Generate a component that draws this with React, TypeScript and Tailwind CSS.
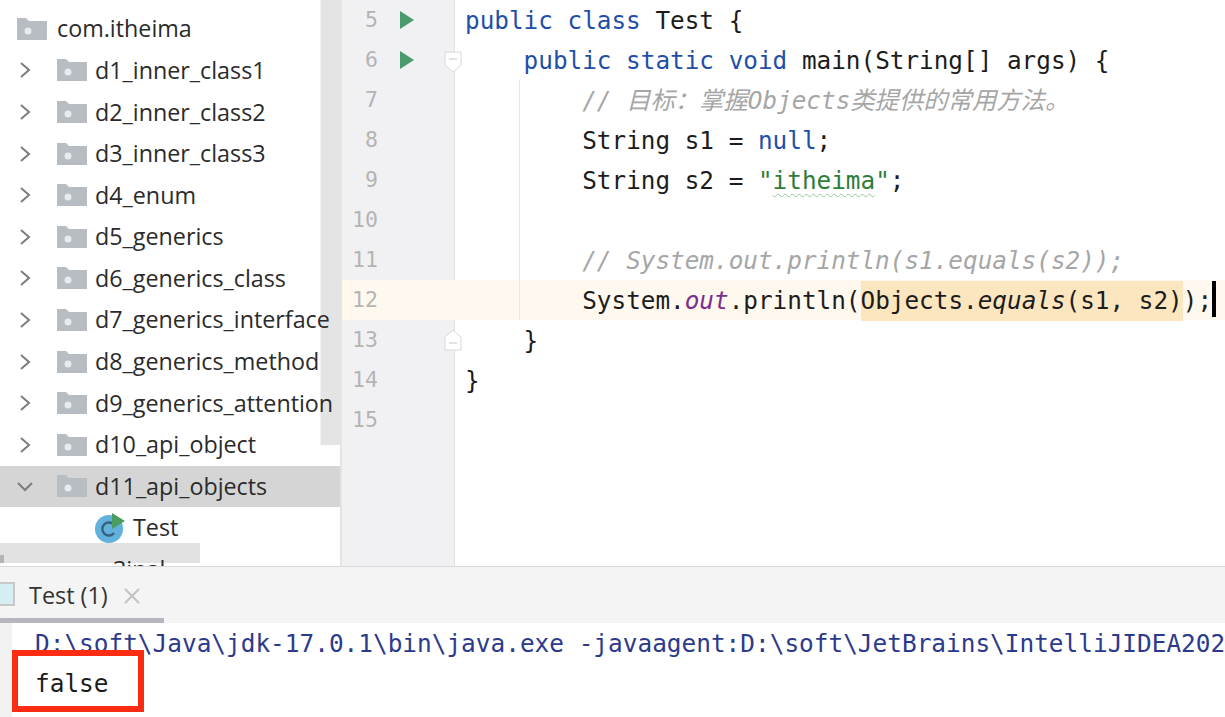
import React from 'react';

const mono = { fontFamily: '"DejaVu Sans Mono", "Noto Sans CJK SC", monospace' };

const FolderIcon = () => (
    <svg width="30" height="24" viewBox="0 0 30 24" className="shrink-0">
        <path d="M0 1 H9 L12 4 H30 V23 H0 Z" fill="#b7bdc3" />
        <circle cx="11" cy="14" r="3.5" fill="#e8eaec" />
    </svg>
);

const Chevron = ({ open }: { open?: boolean }) => (
    <svg width="16" height="16" viewBox="0 0 16 16" className="shrink-0" fill="none" stroke="#7c7c7c" strokeWidth="2">
        {open ? <path d="M1 5 L8 12 L15 5" /> : <path d="M4 1 L12 8 L4 15" />}
    </svg>
);

const folders = [
    'd1_inner_class1',
    'd2_inner_class2',
    'd3_inner_class3',
    'd4_enum',
    'd5_generics',
    'd6_generics_class',
    'd7_generics_interface',
    'd8_generics_method',
    'd9_generics_attention',
    'd10_api_object',
];

const ProjectTree = () => (
    <div className="relative w-[340px] shrink-0 overflow-hidden bg-white pt-2 text-[23.3px] text-[#2b2b2b]" style={{ fontFamily: '"Open Sans", sans-serif' }}>
        {/* scrollbars go under the rows, long names run over them */}
        <div className="absolute left-[320px] top-0 h-[445px] w-[20px] border-l border-[#f2f2f2] bg-[#e4e4e4]" />
        <div className="absolute bottom-[3px] left-0 h-[20px] w-[200px] bg-[#e2e2e2]" />
        <div className="absolute bottom-[3px] left-0 h-[8px] w-[4px] bg-[#b5b5b5]" />
        <div className="relative">
            <div className="flex h-[41.6px] items-center gap-[10px] whitespace-nowrap pl-[17px]">
                <FolderIcon />
                <span>com.itheima</span>
            </div>
            {folders.map((name) => (
                <div key={name} className="flex h-[41.6px] items-center whitespace-nowrap pl-[17px]">
                    <Chevron />
                    <div className="ml-[24px] mr-[8px]"><FolderIcon /></div>
                    <span>{name}</span>
                </div>
            ))}
            <div className="flex h-[41.6px] items-center whitespace-nowrap bg-[#d5d5d5] pl-[17px]">
                <Chevron open />
                <div className="ml-[24px] mr-[8px]"><FolderIcon /></div>
                <span>d11_api_objects</span>
            </div>
            <div className="flex h-[41.6px] items-center whitespace-nowrap pl-[94px]">
                <svg width="32" height="32" viewBox="0 0 32 32" className="shrink-0">
                    <circle cx="15" cy="17" r="14" fill="#62b1dd" />
                    <path d="M20 13 A6.5 6.5 0 1 0 20 21" fill="none" stroke="#35627f" strokeWidth="2.4" />
                    <path d="M18 1 L31 9 L18 17 Z" fill="#4a9d5f" />
                </svg>
                <span className="ml-[7px]">Test</span>
            </div>
            <div className="flex h-[41.6px] items-center whitespace-nowrap pl-[113px]">3inal</div>
        </div>
    </div>
);

type Line = { n: number; run?: boolean; active?: boolean; code?: React.ReactNode };

const lines: Line[] = [
    { n: 5, run: true, code: <><span className="text-[#1f4fa8]">public class</span> Test {'{'}</> },
    { n: 6, run: true, code: <>{'    '}<span className="text-[#1f4fa8]">public static void</span> main(String[] args) {'{'}</> },
    { n: 7, code: <span className="italic text-[#a6a6a6]">{'        '}// 目标：掌握Objects类提供的常用方法。</span> },
    { n: 8, code: <>{'        '}String s1 = <span className="text-[#1f4fa8]">null</span>;</> },
    { n: 9, code: <>{'        '}String s2 = <span className="text-[#2f7d3b]">"<span className="underline decoration-wavy decoration-[#9cc7a4] decoration-1 underline-offset-4">itheima</span>"</span>;</> },
    { n: 10 },
    { n: 11, code: <span className="italic text-[#a6a6a6]">{'        '}// System.out.println(s1.equals(s2));</span> },
    {
        n: 12,
        active: true,
        code: (
            <>
                {'        '}System.<span className="italic text-[#7a2f8f]">out</span>.println(
                <span className="inline-block h-10 bg-[#fbe6bf]">Objects.<span className="italic">equals</span>(s1, s2)</span>);
            </>
        ),
    },
    { n: 13, code: <>{'    '}{'}'}</> },
    { n: 14, code: <>{'}'}</> },
    { n: 15 },
];

const Editor = () => (
    <div className="relative flex min-w-0 flex-1 overflow-hidden border-l-2 border-[#e4e4e4] bg-white text-[24.33px] text-[#1c1c1c]" style={mono}>
        <div className="w-[113px] shrink-0 border-r border-[#e2e2e2] bg-[#f1f1f3]" />
        <div className="absolute inset-0">
            {lines.map((l) => (
                <div key={l.n} className={`flex h-10 items-center whitespace-pre ${l.active ? 'bg-[#fff8ee]' : ''}`}>
                    <span className="w-[36px] text-right text-[21.5px] text-[#b4b4b4]">{l.n}</span>
                    <span className="flex w-[37px] justify-end">
                        {l.run && (
                            <svg width="16" height="20" viewBox="0 0 16 20">
                                <path d="M1 1 L15 10 L1 19 Z" fill="#4a9a6c" />
                            </svg>
                        )}
                    </span>
                    <span className="pl-[50px] pt-[2px] leading-10">{l.code}</span>
                </div>
            ))}
        </div>
        {/* indent guide and fold markers */}
        <div className="absolute left-[177px] top-[80px] h-[240px] w-px bg-[#e8e8e8]" />
        <svg className="absolute left-[102px] top-[51px]" width="18" height="22" viewBox="0 0 18 22">
            <path d="M1 1 H17 V14 L9 21 L1 14 Z" fill="#fff" stroke="#d8d8d8" />
            <path d="M5 8 H13" stroke="#c4c4c4" />
        </svg>
        <svg className="absolute left-[102px] top-[329px]" width="18" height="22" viewBox="0 0 18 22">
            <path d="M1 21 H17 V8 L9 1 L1 8 Z" fill="#fff" stroke="#d8d8d8" />
            <path d="M5 14 H13" stroke="#c4c4c4" />
        </svg>
        <div className="absolute left-[870px] top-[281px] h-[36px] w-[4px] bg-black" />
    </div>
);

const Console = () => (
    <div className="relative flex min-h-0 flex-1 flex-col overflow-hidden border-t border-[#d8d8d8] bg-white">
        <div className="flex h-[56px] shrink-0 flex-col bg-[#f4f4f4]">
            <div className="flex w-[164px] flex-1 items-center border-b-[5px] border-[#b5b6c0] pt-[6px] text-[23.4px] text-[#333]" style={{ fontFamily: '"Open Sans", sans-serif' }}>
                <svg width="16" height="24" viewBox="0 0 16 24" className="-mt-[4px] shrink-0">
                    <rect x="-4" y="1" width="18" height="22" fill="#d5eef3" stroke="#c8c8c8" strokeWidth="2" />
                </svg>
                <span className="ml-[13px]">Test (1)</span>
                <svg width="18" height="18" viewBox="0 0 18 18" className="ml-[15px]" stroke="#c2c2c2" strokeWidth="2">
                    <path d="M2 2 L16 16 M16 2 L2 16" />
                </svg>
            </div>
        </div>
        <div className="flex flex-1">
            <div className="w-[12px] shrink-0 bg-[#f2f2f2]" />
            <div className="min-w-0 flex-1 whitespace-pre pl-[23px] pt-[1px] text-[24.42px] leading-10 text-[#1c1c1c]" style={mono}>
                <div className="text-[#2c3a8c]">D:\soft\Java\jdk-17.0.1\bin\java.exe -javaagent:D:\soft\JetBrains\IntelliJIDEA2021</div>
                <div>false</div>
            </div>
        </div>
        {/* red annotation box */}
        <div className="absolute left-[12px] top-[83px] h-[62px] w-[132px] border-[6px] border-[#fa2d12]" />
    </div>
);

export default function App() {
    return (
        <div className="flex h-[717px] w-[1225px] flex-col overflow-hidden bg-white">
            <div className="flex h-[566px] shrink-0">
                <ProjectTree />
                <Editor />
            </div>
            <Console />
        </div>
    );
}
